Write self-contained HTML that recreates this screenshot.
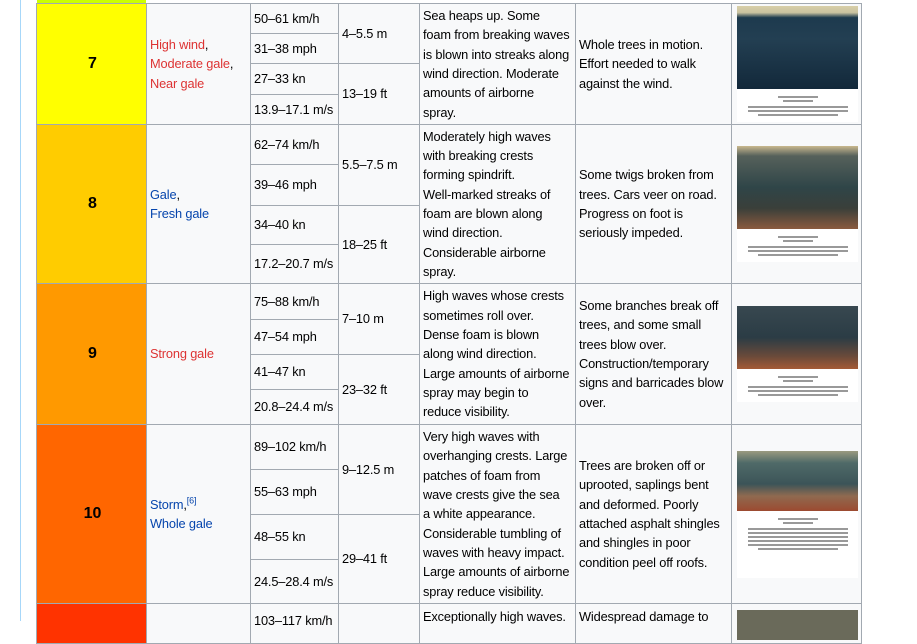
<!DOCTYPE html>
<html><head><meta charset="utf-8"><style>
body{margin:0;width:917px;height:621px;overflow:hidden;background:#fff;font-family:"Liberation Sans",sans-serif;font-size:12.8px;color:#000;position:relative}
.side{position:absolute;left:0;top:0;width:20px;height:621px;background:#fff;border-right:1px solid #a7d7f9}
table{position:absolute;left:36px;top:3px;border-collapse:collapse;table-layout:fixed;width:825px;background:#f8f9fa}
td{border:1px solid #a2a9b1;padding:0 1px 0 3px;vertical-align:middle;line-height:19.3px;overflow:hidden;white-space:nowrap;letter-spacing:-0.15px}
td.n{text-align:center;font-weight:bold;font-size:16px;letter-spacing:0}
.r{color:#d33}.b{color:#0645ad}
sup{font-size:9px;line-height:0}
.img{width:121px;margin:0 auto;background:#fff;overflow:hidden}
.ph{height:83px}
.cap{height:28px;overflow:hidden;padding-top:5px}
.cap i{display:block;height:2px;background:#999;margin:2px auto}
</style></head><body>
<div class="side"></div>
<div style="position:absolute;left:37px;top:0;width:109px;height:3px;background:#ccff00"></div>
<table>
<colgroup><col style="width:110px"><col style="width:104px"><col style="width:88px"><col style="width:81px"><col style="width:156px"><col style="width:156px"><col style="width:130px"></colgroup>
<tr style="height:30px"><td rowspan="4" class="n" style="background:#ffff00">7</td><td rowspan="4"><span class="r">High wind</span>,<br><span class="r">Moderate gale</span>,<br><span class="r">Near gale</span></td><td>50–61 km/h</td><td rowspan="2">4–5.5 m</td><td rowspan="4">Sea heaps up. Some<br>foam from breaking waves<br>is blown into streaks along<br>wind direction. Moderate<br>amounts of airborne<br>spray.</td><td rowspan="4">Whole trees in motion.<br>Effort needed to walk<br>against the wind.</td><td rowspan="4"><div class="img"><div class="ph" style="background:linear-gradient(180deg,#d8cfa8 0,#c9c2a0 8%,#1d3a4e 14%,#233f52 40%,#12283a 100%)"></div><div class="cap"><i style="width:40px"></i><i style="width:30px"></i><i style="width:100px;margin-top:4px"></i><i style="width:100px"></i><i style="width:80px"></i></div></div></td></tr>
<tr style="height:30px"><td>31–38 mph</td></tr>
<tr style="height:31px"><td>27–33 kn</td><td rowspan="2">13–19 ft</td></tr>
<tr style="height:30px"><td>13.9–17.1 m/s</td></tr>

<tr style="height:40px"><td rowspan="4" class="n" style="background:#ffcc00">8</td><td rowspan="4"><span class="b">Gale</span>,<br><span class="b">Fresh gale</span></td><td>62–74 km/h</td><td rowspan="2">5.5–7.5 m</td><td rowspan="4">Moderately high waves<br>with breaking crests<br>forming spindrift.<br>Well-marked streaks of<br>foam are blown along<br>wind direction.<br>Considerable airborne<br>spray.</td><td rowspan="4">Some twigs broken from<br>trees. Cars veer on road.<br>Progress on foot is<br>seriously impeded.</td><td rowspan="4"><div class="img"><div class="ph" style="background:linear-gradient(180deg,#c9b88e 0,#56615b 12%,#2f4548 50%,#3a3f3a 75%,#8a5a3e 100%)"></div><div class="cap"><i style="width:40px"></i><i style="width:30px"></i><i style="width:100px;margin-top:4px"></i><i style="width:100px"></i><i style="width:80px"></i></div></div></td></tr>
<tr style="height:41px"><td>39–46 mph</td></tr>
<tr style="height:39px"><td>34–40 kn</td><td rowspan="2">18–25 ft</td></tr>
<tr style="height:39px"><td>17.2–20.7 m/s</td></tr>

<tr style="height:36px"><td rowspan="4" class="n" style="background:#ff9900">9</td><td rowspan="4"><span class="r">Strong gale</span></td><td>75–88 km/h</td><td rowspan="2">7–10 m</td><td rowspan="4">High waves whose crests<br>sometimes roll over.<br>Dense foam is blown<br>along wind direction.<br>Large amounts of airborne<br>spray may begin to<br>reduce visibility.</td><td rowspan="4">Some branches break off<br>trees, and some small<br>trees blow over.<br>Construction/temporary<br>signs and barricades blow<br>over.</td><td rowspan="4"><div class="img"><div class="ph" style="height:63px;background:linear-gradient(180deg,#384850 0,#2b3c45 50%,#6a4a3a 80%,#a45a36 100%)"></div><div class="cap"><i style="width:40px"></i><i style="width:30px"></i><i style="width:100px;margin-top:4px"></i><i style="width:100px"></i><i style="width:80px"></i></div></div></td></tr>
<tr style="height:35px"><td>47–54 mph</td></tr>
<tr style="height:35px"><td>41–47 kn</td><td rowspan="2">23–32 ft</td></tr>
<tr style="height:35px"><td>20.8–24.4 m/s</td></tr>

<tr style="height:45px"><td rowspan="4" class="n" style="background:#ff6600">10</td><td rowspan="4"><span class="b">Storm</span>,<sup class="b">[6]</sup><br><span class="b">Whole gale</span></td><td>89–102 km/h</td><td rowspan="2">9–12.5 m</td><td rowspan="4">Very high waves with<br>overhanging crests. Large<br>patches of foam from<br>wave crests give the sea<br>a white appearance.<br>Considerable tumbling of<br>waves with heavy impact.<br>Large amounts of airborne<br>spray reduce visibility.</td><td rowspan="4">Trees are broken off or<br>uprooted, saplings bent<br>and deformed. Poorly<br>attached asphalt shingles<br>and shingles in poor<br>condition peel off roofs.</td><td rowspan="4"><div class="img"><div class="ph" style="height:60px;background:linear-gradient(180deg,#9a9a80 0,#4f6a68 20%,#3c5458 55%,#8f6a50 75%,#9c4a30 100%)"></div><div class="cap" style="height:62px"><i style="width:40px"></i><i style="width:30px"></i><i style="width:100px;margin-top:4px"></i><i style="width:100px"></i><i style="width:100px"></i><i style="width:100px"></i><i style="width:100px"></i><i style="width:80px"></i></div></div></td></tr>
<tr style="height:45px"><td>55–63 mph</td></tr>
<tr style="height:45px"><td>48–55 kn</td><td rowspan="2">29–41 ft</td></tr>
<tr style="height:44px"><td>24.5–28.4 m/s</td></tr>

<tr style="height:40px"><td class="n" style="background:#ff3300"></td><td></td><td style="vertical-align:top;padding-top:7px">103–117 km/h</td><td></td><td style="vertical-align:top;padding-top:3px">Exceptionally high waves.</td><td style="vertical-align:top;padding-top:3px">Widespread damage to</td><td style="vertical-align:top;padding-top:6px"><div class="img" style="height:30px;background:#6a6a5a"></div></td></tr>
</table>
</body></html>
